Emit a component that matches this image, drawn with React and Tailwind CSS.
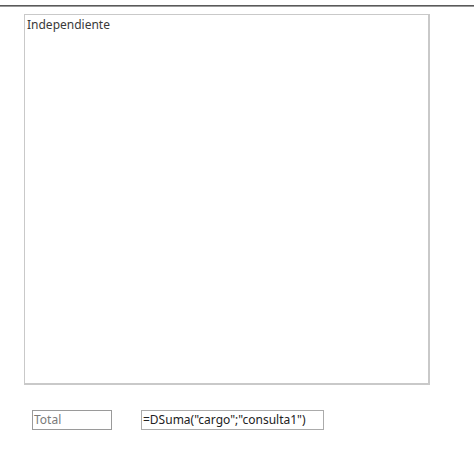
import React from 'react';

const font = { fontFamily: '"Noto Sans", "Open Sans", sans-serif' };

export default function App() {
  return (
    <div className="w-[474px] h-[457px] bg-white overflow-hidden font-['Noto_Sans',sans-serif]">
      {/* ruler line across the top */}
      <div className="mt-[5px] h-[2px] bg-[#5a5a5a] border-b border-[#9a9a9a]" />

      {/* detail section box */}
      <div className="ml-[24px] mt-[7px] w-[406px] h-[371px] border border-[#c9c9c9] border-r-2 border-b-2">
        <div className="pl-[2px] pt-[1px] text-[12px] leading-[17px] text-[#3a3a3a]">Independiente</div>
      </div>

      {/* footer controls */}
      <div className="flex items-start mt-[25px]">
        <div className="ml-[32px] w-[80px] h-[20px] border border-[#9a9a9a] px-[1px] text-[12px] leading-[17px] text-[#7a7a7a]">
          Total
        </div>
        <div className="ml-[29px] w-[183px] h-[20px] border border-[#ababab] px-[1px] text-[12px] leading-[17px] text-[#222]">
          =DSuma("cargo";"consulta1")
        </div>
      </div>
    </div>
  );
}
